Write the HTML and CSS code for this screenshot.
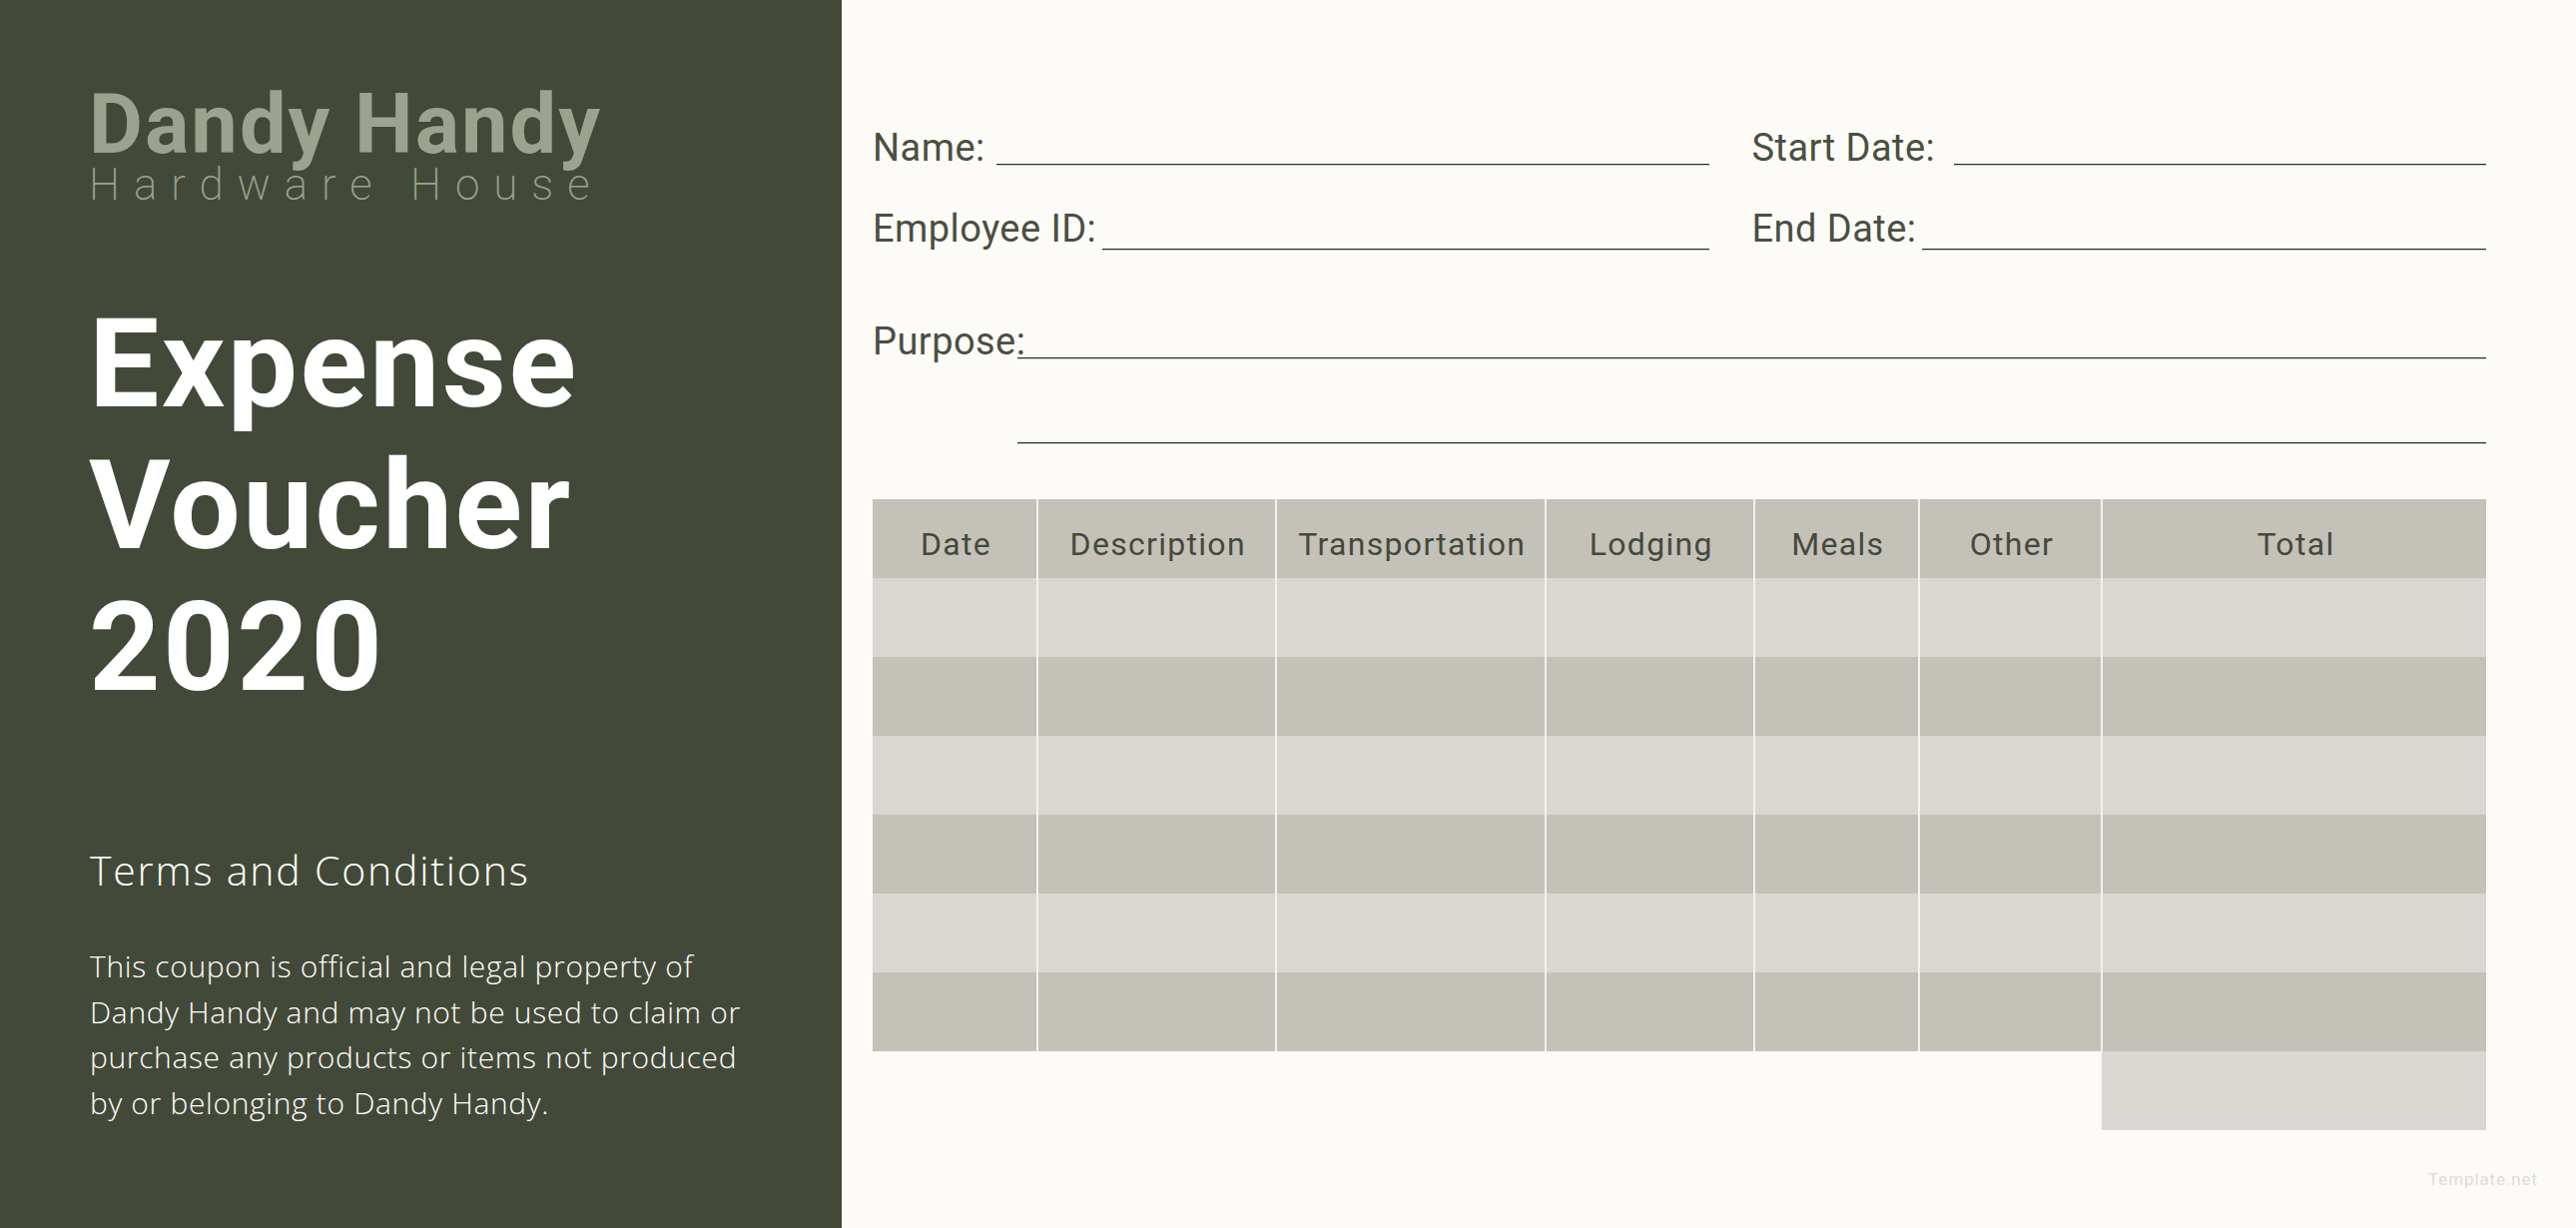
FILE: index.html
```html
<!DOCTYPE html>
<html lang="en">
<head>
<meta charset="utf-8">
<title>Expense Voucher 2020</title>
<link rel="stylesheet" href="styles.css">
</head>
<body>
<div class="page">
  <aside class="side">
    <h2 class="brand">Dandy Handy</h2>
    <p class="tagline">Hardware House</p>
    <h1 class="title">Expense<br>Voucher<br>2020</h1>
    <h3 class="terms-title">Terms and Conditions</h3>
    <p class="terms">This coupon is official and legal property of<br>Dandy Handy and may not be used to claim or<br>purchase any products or items not produced<br>by or belonging to Dandy Handy.</p>
  </aside>
  <main class="main">
    <div class="fields">
      <div class="field field-low"><span class="label">Name:</span><span class="rule gap-name"></span></div>
      <div class="field field-low"><span class="label">Start Date:</span><span class="rule gap-start"></span></div>
      <div class="field field-high"><span class="label">Employee ID:</span><span class="rule gap-tight"></span></div>
      <div class="field field-high"><span class="label">End Date:</span><span class="rule gap-tight"></span></div>
    </div>
    <div class="purpose">
      <span class="label purpose-label">Purpose:</span><span class="rule"></span>
      <span class="rule rule-second"></span>
    </div>
    <table class="sheet">
      <colgroup>
        <col class="c-date"><col class="c-desc"><col class="c-trans"><col class="c-lodg"><col class="c-meal"><col class="c-other"><col class="c-total">
      </colgroup>
      <thead>
        <tr><th>Date</th><th>Description</th><th>Transportation</th><th>Lodging</th><th>Meals</th><th>Other</th><th>Total</th></tr>
      </thead>
      <tbody>
        <tr class="light"><td></td><td></td><td></td><td></td><td></td><td></td><td></td></tr>
        <tr class="dark"><td></td><td></td><td></td><td></td><td></td><td></td><td></td></tr>
        <tr class="light"><td></td><td></td><td></td><td></td><td></td><td></td><td></td></tr>
        <tr class="dark"><td></td><td></td><td></td><td></td><td></td><td></td><td></td></tr>
        <tr class="light"><td></td><td></td><td></td><td></td><td></td><td></td><td></td></tr>
        <tr class="dark"><td></td><td></td><td></td><td></td><td></td><td></td><td></td></tr>
        <tr class="sum"><td colspan="6" class="blank"></td><td class="sum-cell"></td></tr>
      </tbody>
    </table>
    <div class="mark">Template.net</div>
  </main>
</div>
</body>
</html>
```
FILE: styles.css
```css
* { box-sizing: border-box; }
html, body { margin: 0; height: 100%; }
body { background: #fcfbf7; font-family: "Roboto", "Liberation Sans", sans-serif; overflow: hidden; }
.page { display: flex; width: 2580px; height: 1230px; }

.side { width: 843px; flex: none; background: #434938; padding: 80px 0 0 89px; }
.brand { margin: 0; font: 700 83px/90px "Roboto", sans-serif; color: #9ba28e; letter-spacing: 2px; }
.tagline { margin: -10px 0 0; font: 200 44px/50px "Roboto", sans-serif; color: #9ba28e; letter-spacing: 13.9px; white-space: nowrap; }
.title { margin: 84px 0 0; font: 700 125px/142px "Roboto", sans-serif; color: #fff; letter-spacing: 2.4px; }
.terms-title { margin: 126px 0 0 1px; font: 300 41px/50px "Open Sans", sans-serif; color: #fff; letter-spacing: 1.8px; }
.terms { margin: 49px 0 0 1px; font: 300 30px/45.7px "Open Sans", sans-serif; color: #fff; letter-spacing: 0.65px; white-space: nowrap; }

.main { flex: 1; padding: 120px 0 0 31px; position: relative; min-width: 0; }
.fields { display: grid; grid-template-columns: 837.5px 735px; column-gap: 43px; row-gap: 39px; }
.field { display: flex; align-items: flex-end; height: 46px; }
.label { font-size: 38px; line-height: 46px; letter-spacing: 0.45px; color: #4a4f41; white-space: nowrap; flex: none; }
.field-low .label { margin-bottom: -5px; }
.field-high .label { margin-bottom: -1px; }
.rule { display: block; flex: 1; height: 2px; border-top: 1px solid #2a2a28; background: #c9c9c4; }
.gap-name { margin-left: 11px; }
.gap-start { margin-left: 19px; }
.gap-tight { margin-left: 6px; }

.purpose { display: grid; grid-template-columns: 145px 1fr; grid-auto-rows: 2px; row-gap: 83px; margin-top: 107px; width: 1616px; }
.purpose-label { margin-top: -39px; height: 46px; width: 145px; overflow: visible; }
.rule-second { grid-column: 2; }

.sheet { border-collapse: collapse; table-layout: fixed; width: 1616px; margin-top: 55px; }
.c-date { width: 165px; } .c-desc { width: 238.5px; } .c-trans { width: 270.5px; } .c-lodg { width: 208.5px; }
.c-meal { width: 165.5px; } .c-other { width: 183px; } .c-total { width: 385px; }
.sheet tr { height: 79px; }
.sheet th, .sheet td { padding: 0; border-left: 2px solid #f3f2ee; }
.sheet th:first-child, .sheet td:first-child { border-left: 0; }
.sheet th { background: #c4c1b9; font-size: 32px; font-weight: 400; letter-spacing: 1.3px; color: #44493b; text-align: center; padding: 11px 0 0 3px; }
.light td { background: #dad7d2; }
.dark td { background: #c4c1b9; }
.sum .blank { background: transparent; }
.sum .sum-cell { background: #dad7d2; border-left: 0; }

.mark { position: absolute; right: 38px; top: 1170px; font-size: 17px; line-height: 22px; letter-spacing: 0.9px; color: #dedcd8; }
```
